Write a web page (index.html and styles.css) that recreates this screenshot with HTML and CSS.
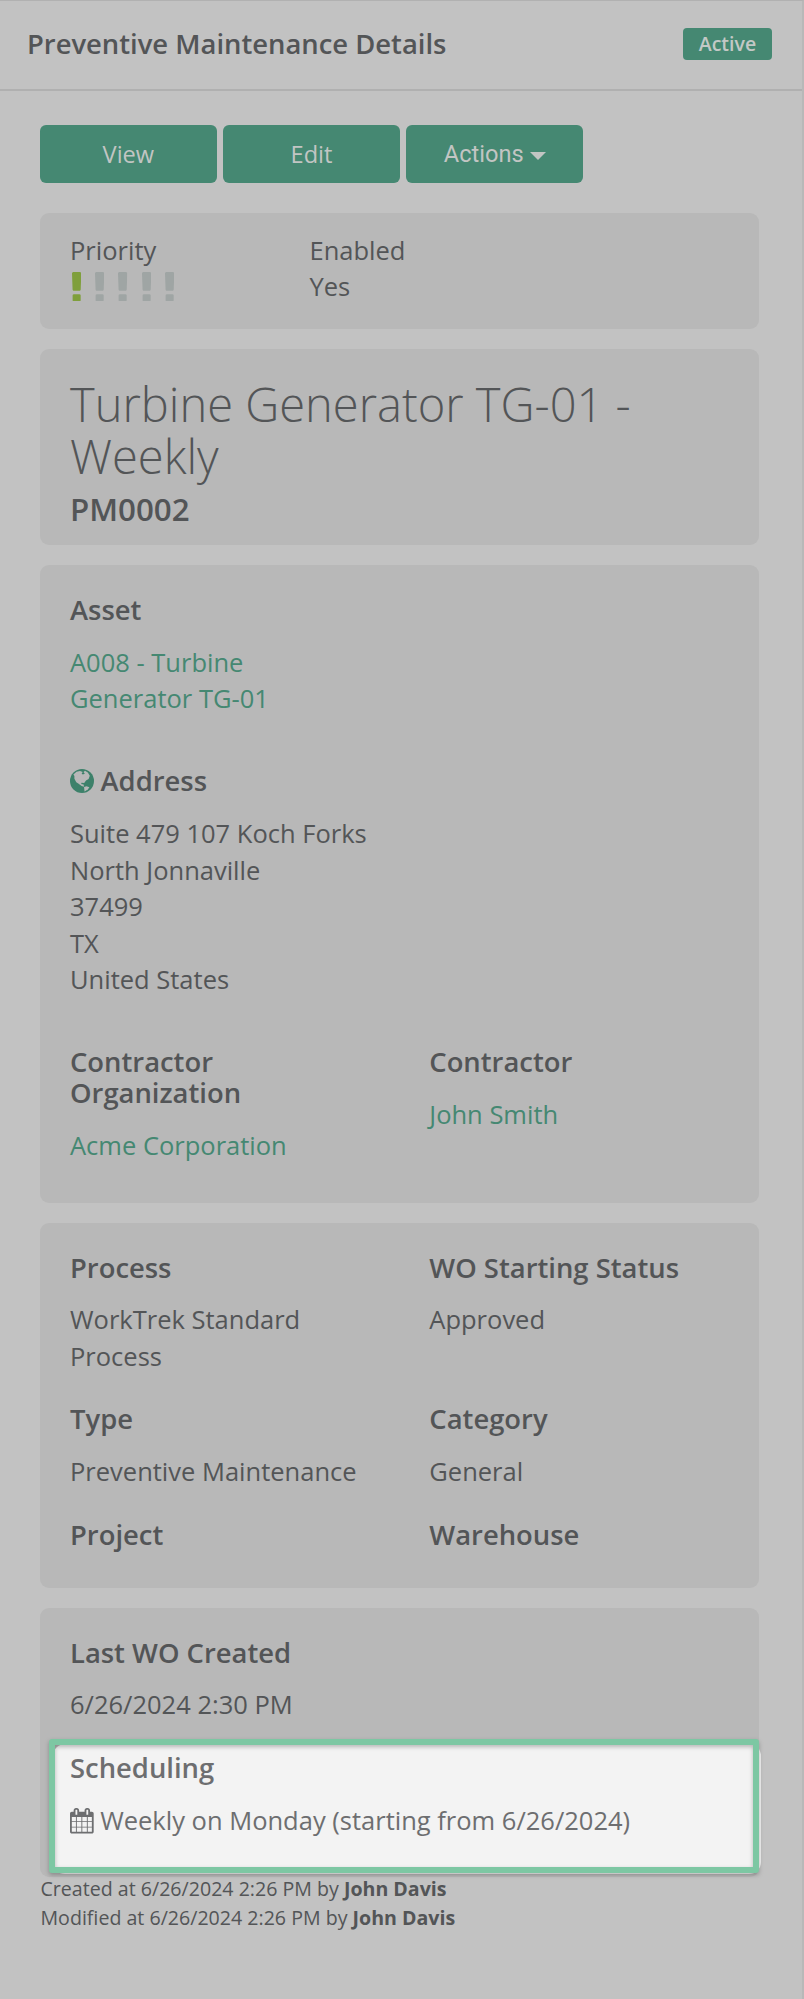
FILE: index.html
```html
<!DOCTYPE html>
<html lang="en">
<head>
<meta charset="utf-8">
<title>Preventive Maintenance Details</title>
<link rel="stylesheet" href="styles.css">
</head>
<body>
<svg class="sprite" aria-hidden="true">
  <symbol id="exclamation" viewBox="642 128 444 1408"><path d="M1056 1248v224q0 26-19 45t-45 19h-256q-26 0-45-19t-19-45v-224q0-26 19-45t45-19h256q26 0 45 19t19 45zm30-1056l-28 768q-1 26-20.500 45t-45.500 19h-256q-26 0-45.500-19t-20.500-45l-28-768q-1-26 17.500-45t44.500-19h320q26 0 44.500 19t17.500 45z"/></symbol>
</svg>
<div class="panel">
  <header class="header">
    <h1 class="header-title">Preventive Maintenance Details</h1>
    <span class="badge">Active</span>
  </header>
  <main class="content">
    <div class="buttons">
      <button class="btn">View</button>
      <button class="btn">Edit</button>
      <button class="btn btn-menu">Actions<span class="caret"></span></button>
    </div>

    <section class="card card-summary">
      <div class="summary-priority">
        <div>Priority</div>
        <div class="marks">
          <svg class="mark mark-on"><use href="#exclamation"/></svg>
          <svg class="mark"><use href="#exclamation"/></svg>
          <svg class="mark"><use href="#exclamation"/></svg>
          <svg class="mark"><use href="#exclamation"/></svg>
          <svg class="mark"><use href="#exclamation"/></svg>
        </div>
      </div>
      <div>
        <div>Enabled</div>
        <div>Yes</div>
      </div>
    </section>

    <section class="card card-title">
      <h2 class="title">Turbine Generator TG-01 - Weekly</h2>
      <h3 class="code">PM0002</h3>
    </section>

    <section class="card card-asset">
      <div class="field field-half">
        <h4 class="label">Asset</h4>
        <a class="link">A008 - Turbine<br>Generator TG-01</a>
      </div>
      <div class="field">
        <h4 class="label"><svg class="icon globe" viewBox="0 0 24 24"><circle cx="12" cy="12" r="12"/><path class="land" d="M3.400 5.500L6.500 2.800 10 2 12.800 3 11.600 4.600 12.800 5.600 14.800 4.800 13.500 3 15 1.800 17.800 3.400 19.800 6.800 18.600 10 16 11.600 14.200 14 11.500 13.800 11.200 15 13.600 15.600 14 17.800 11.600 17 8.300 14.400 6.300 13.200 4.400 9.800 4.400 7z"/><path class="land" d="M14 18L16.500 17.200 19.400 18.300 17.800 20.600 14.600 22.500z"/></svg>Address</h4>
        <div>Suite 479 107 Koch Forks</div>
        <div>North Jonnaville</div>
        <div>37499</div>
        <div>TX</div>
        <div>United States</div>
      </div>
      <div class="pair">
        <div class="field">
          <h4 class="label">Contractor<br>Organization</h4>
          <a class="link">Acme Corporation</a>
        </div>
        <div class="field">
          <h4 class="label">Contractor</h4>
          <a class="link">John Smith</a>
        </div>
      </div>
    </section>

    <section class="card card-process">
      <div class="pair">
        <div class="field">
          <h4 class="label">Process</h4>
          <div>WorkTrek Standard<br>Process</div>
        </div>
        <div class="field">
          <h4 class="label">WO Starting Status</h4>
          <div>Approved</div>
        </div>
      </div>
      <div class="pair">
        <div class="field">
          <h4 class="label">Type</h4>
          <div>Preventive Maintenance</div>
        </div>
        <div class="field">
          <h4 class="label">Category</h4>
          <div>General</div>
        </div>
      </div>
      <div class="pair">
        <h4 class="label label-last">Project</h4>
        <h4 class="label label-last">Warehouse</h4>
      </div>
    </section>

    <section class="card card-schedule">
      <div class="field">
        <h4 class="label">Last WO Created</h4>
        <div>6/26/2024 2:30 PM</div>
      </div>
      <div class="field spotlight">
        <div class="spotlight-fill"></div>
        <div class="spotlight-frame"></div>
        <div class="spotlight-body">
          <h4 class="label">Scheduling</h4>
          <div><svg class="icon calendar" viewBox="64 0 1664 1792"><path d="M192 1664h288v-288h-288v288zm352 0h320v-288h-320v288zm-352-352h288v-320h-288v320zm352 0h320v-320h-320v320zm-352-384h288v-288h-288v288zm736 736h320v-288h-320v288zm-384-736h320v-288h-320v288zm768 736h288v-288h-288v288zm-384-352h320v-320h-320v320zm-352-864v-288q0-13-9.500-22.500t-22.500-9.500h-64q-13 0-22.500 9.500t-9.500 22.500v288q0 13 9.500 22.500t22.500 9.500h64q13 0 22.500-9.500t9.500-22.500zm736 864h288v-320h-288v320zm-384-384h320v-288h-320v288zm384 0h288v-288h-288v288zm32-480v-288q0-13-9.500-22.500t-22.500-9.500h-64q-13 0-22.500 9.500t-9.500 22.500v288q0 13 9.500 22.500t22.500 9.500h64q13 0 22.500-9.500t9.500-22.500zm384-64v1280q0 52-38 90t-90 38h-1408q-52 0-90-38t-38-90v-1280q0-52 38-90t90-38h128v-96q0-66 47-113t113-47h64q66 0 113 47t47 113v96h384v-96q0-66 47-113t113-47h64q66 0 113 47t47 113v96h128q52 0 90 38t38 90z"/></svg>Weekly on Monday (starting from 6/26/2024)</div>
        </div>
      </div>
    </section>

    <footer class="footer">
      <div>Created at 6/26/2024 2:26 PM by <b>John Davis</b></div>
      <div>Modified at 6/26/2024 2:26 PM by <b>John Davis</b></div>
    </footer>
  </main>
</div>
</body>
</html>
```
FILE: styles.css
```css
* { box-sizing: border-box; }
body {
  margin: 0;
  background: #c2c2c2;
  color: #535557;
  font: 25.500px/36.500px "Open Sans", "Noto Sans", sans-serif;
}
.sprite { display: none; }
.panel { height: 1999px; border-top: 1px solid #b1b1b1; border-right: 2px solid #b8b8b8; }
.header {
  display: flex; align-items: center; justify-content: space-between;
  height: 90px; padding: 0 30px 3px 27px; border-bottom: 2px solid #b0b0b0;
}
.header-title { margin: 0; font-size: 27.400px; font-weight: 600; line-height: 36px; }
.badge {
  width: 89px; height: 32px; border-radius: 4px; background: #458872; color: #c3c8c6;
  font-size: 19.500px; font-weight: 600; line-height: 31px; text-align: center;
}
.content { padding: 33.500px 43.500px 0 40px; }
.buttons { display: flex; gap: 6.500px; margin-bottom: 29.700px; }
.btn {
  display: flex; align-items: center; justify-content: center;
  width: 176.700px; height: 58.800px; padding: 0; border: 0; border-radius: 6px;
  background: #458872; color: #c2c5c3; font: 23.600px "Open Sans", sans-serif;
}
.btn-menu { font-family: Roboto, sans-serif; }
.caret { margin: 4px 0 0 6px; border: 8px solid transparent; border-top-color: #c2c5c3; border-bottom: 0; }
.card { margin-bottom: 20px; padding: 29.700px 30px 0; border-radius: 9px; background: #b8b8b8; }
.card-summary { display: flex; height: 116px; padding-top: 19px; }
.summary-priority { width: 239.500px; }
.marks { display: flex; gap: 13.900px; padding: 3.300px 0 0 2px; }
.mark { width: 9.300px; height: 29.600px; fill: #9fa5a4; }
.mark-on { fill: #7f9f3c; }
.card-title { height: 196.500px; padding-top: 28.800px; }
.title { margin: 0; font-size: 47.050px; font-weight: 300; line-height: 52.300px; }
.code { margin: 10.100px 0 0; font-size: 31.300px; font-weight: 600; line-height: 34.600px; }
.card-asset { height: 637.500px; }
.field { margin-bottom: 49.500px; }
.label { margin: 0 0 18.200px; font-size: 27.400px; font-weight: 600; line-height: 30.600px; }
.link { color: #458872; }
.pair { display: grid; grid-template-columns: 359.300px 1fr; }
.card-process { height: 365px; }
.card-process .field, .card-schedule .field { margin-bottom: 30px; }
.label-last { margin: 0; }
.card-schedule { height: 269.500px; margin-bottom: 0; }
.icon { display: inline-block; }
.globe { width: 24px; height: 24px; margin-right: 6.500px; vertical-align: -2px; fill: #3d816a; }
.land { fill: #b8b8b8; }
.calendar { width: 23.700px; height: 25.500px; margin-right: 6.500px; vertical-align: -4px; fill: #6d6e70; }
.spotlight { position: relative; color: #6d6e70; }
/* The lit area and its frame extend past the text block they surround. */
.spotlight-fill {
  position: absolute; left: -17px; top: -8.500px; right: -32.500px; height: 130px;
  border-radius: 12px; background: #f3f3f3;
}
.spotlight-frame {
  position: absolute; left: -21px; top: -14.300px; right: -30.500px; height: 134.500px;
  border: 6px solid #7dc7a3; border-radius: 3px; filter: drop-shadow(0 2px 2px rgba(0, 0, 0, .25));
}
.spotlight-body { position: relative; }
.footer { margin: -2.500px 0 0 .500px; font-size: 19.600px; line-height: 28.600px; }
```
